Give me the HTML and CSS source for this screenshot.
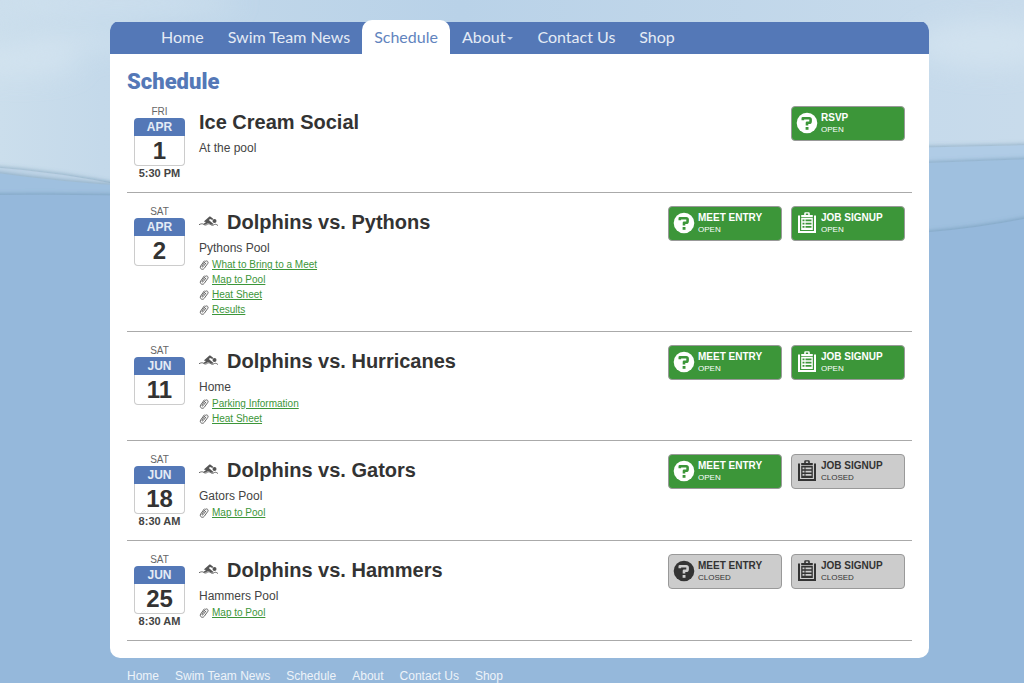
FILE: index.html
```html
<!DOCTYPE html>
<html lang="en">

<head>
  <meta charset="utf-8">
  <meta name="viewport" content="width=device-width, initial-scale=1">
  <title>Schedule</title>
  <link rel="stylesheet" href="styles.css">
</head>

<body>
  <!-- sky and waves -->
  <svg class="backdrop" viewBox="0 0 1024 260" preserveAspectRatio="none" aria-hidden="true">
    <defs>
      <linearGradient id="sky" x1="0" y1="0" x2="1" y2="0">
        <stop offset="0" stop-color="#cbdeec" />
        <stop offset=".1" stop-color="#c4d9ea" />
        <stop offset=".45" stop-color="#b9d2e8" />
        <stop offset=".9" stop-color="#c6daeb" />
        <stop offset="1" stop-color="#c8dbeb" />
      </linearGradient>
      <filter id="soft" x="-20%" y="-40%" width="140%" height="180%">
        <feGaussianBlur stdDeviation="12" />
      </filter>
      <filter id="shade" x="-5%" y="-10%" width="110%" height="120%">
        <feDropShadow dx="0" dy="-1" stdDeviation="2" flood-color="#56809f" flood-opacity=".5" />
      </filter>
    </defs>
    <path fill="url(#sky)" d="M0 0h1024v260H0z" />
    <g fill="#d8e7f2" filter="url(#soft)" opacity=".6">
      <ellipse cx="20" cy="62" rx="60" ry="14" />
      <ellipse cx="80" cy="42" rx="60" ry="8" />
      <ellipse cx="985" cy="45" rx="70" ry="24" />
      <ellipse cx="120" cy="3" rx="120" ry="9" />
    </g>
    <path fill="#bdd3e6" filter="url(#shade)" d="M-10 167Q60 172 130 187V260H-10z" />
    <path fill="#b0cce6" filter="url(#shade)" d="M900 148L1034 145V260H900z" />
    <path fill="#9fc0df" filter="url(#shade)" d="M-10 172Q60 182 130 186L900 164L1034 159V270H-10z" />
    <path fill="#95b8db" filter="url(#shade)" d="M-10 195Q300 191 500 232T930 232Q980 228 1034 217V270H-10z" />
    <path fill="#95b8db" d="M-10 236H1034V270H-10z" />
  </svg>

  <!-- shared icons -->
  <svg class="sprite" aria-hidden="true">
    <symbol id="clip" viewBox="0 0 10 12">
      <path fill="none" stroke="#555" stroke-width=".9" stroke-linecap="round"
        d="M6.8 4.2L4.2 7.6C3.5 8.5 2.5 7.7 3.1 6.9L6.2 2.6C7.4 1 9.9 2.5 8.8 4.4L5.2 9.4C3.6 11.5.2 9.6 1.6 7.1L5.2 2" />
    </symbol>
    <symbol id="swimmer" viewBox="0 0 20 12">
      <path fill="#555" d="M4.8 5.5L9.9.9c.5-.4 1.2-.4 1.7-.1l2.6 2-.8 1.2-2.3-1.1-1.3 1.2 5 4.1c-1.5.7-2.7.5-3.8-.3-1.3-1-2.4-.8-3.7.1-1 .7-2.1.9-3.3.3L7 6.1z" />
      <circle cx="15.5" cy="5" r="2" fill="#555" />
      <path fill="none" stroke="#666" stroke-width="1" d="M0 8.7c2-.9 3.1-1.4 4.7-.3 1.5 1 2.5.7 3.7-.2 1.3-.8 2.5-.2 3.5.6 1.4.8 2.5.5 3.6-.3 1.2-.6 2.3.1 3.5 1.1" />
    </symbol>
    <symbol id="question" viewBox="0 0 22 22">
      <circle cx="11" cy="11" r="10.3" fill="currentColor" />
      <path fill="none" stroke="var(--face)" stroke-width="2.6" stroke-linejoin="round" d="M6.8 8.2V6.3H13.2Q14.6 6.3 14.6 7.6V9.2Q14.6 10.8 13 10.8H11V13.6" />
      <path fill="var(--face)" d="M9.6 15h2.9v2.8H9.6z" />
    </symbol>
    <symbol id="clipboard" viewBox="0 0 20 22">
      <path fill="currentColor" d="M1 3.5h2v15.500h14V3.500h2V21H1z" />
      <path fill="currentColor" fill-rule="evenodd" d="M4.200 3h3V1.600Q7.200.3 8.400.3h3.200q1.200 0 1.200 1.300V3h3v2.300H4.200zM8.800 1.600V3h2.400V1.600z" />
      <path fill="currentColor" fill-rule="evenodd" d="M4.200 6h11.600v12H4.200zM5.500 7.500v1.700h2V7.500zm3 0v1.700h6V7.500zM5.500 10.700v1.700h2v-1.700zm3 0v1.700h6v-1.700zM5.500 14v1.700h2V14zm3 0v1.700h6V14z" />
    </symbol>
  </svg>

  <div class="page">
    <nav class="menu">
      <a href="#">Home</a>
      <a href="#">Swim Team News</a>
      <a href="#" class="active">Schedule</a>
      <a href="#" class="drop">About</a>
      <a href="#">Contact Us</a>
      <a href="#">Shop</a>
    </nav>

    <main class="content">
      <h1>Schedule</h1>

      <section class="event">
        <div class="date">
          <div class="weekday">FRI</div>
          <div class="calendar"><span class="month">APR</span><span class="day">1</span></div>
          <div class="time">5:30 PM</div>
        </div>
        <div class="details">
          <h2>Ice Cream Social</h2>
          <p>At the pool</p>
        </div>
        <div class="actions">
          <button class="open"><svg><use href="#question" /></svg><span><b>RSVP</b><small>OPEN</small></span></button>
        </div>
      </section>

      <section class="event">
        <div class="date">
          <div class="weekday">SAT</div>
          <div class="calendar"><span class="month">APR</span><span class="day">2</span></div>
        </div>
        <div class="details">
          <h2><svg><use href="#swimmer" /></svg>Dolphins vs. Pythons</h2>
          <p>Pythons Pool</p>
          <ul>
            <li><svg><use href="#clip" /></svg><a href="#">What to Bring to a Meet</a></li>
            <li><svg><use href="#clip" /></svg><a href="#">Map to Pool</a></li>
            <li><svg><use href="#clip" /></svg><a href="#">Heat Sheet</a></li>
            <li><svg><use href="#clip" /></svg><a href="#">Results</a></li>
          </ul>
        </div>
        <div class="actions">
          <button class="open"><svg><use href="#question" /></svg><span><b>MEET ENTRY</b><small>OPEN</small></span></button>
          <button class="open"><svg><use href="#clipboard" /></svg><span><b>JOB SIGNUP</b><small>OPEN</small></span></button>
        </div>
      </section>

      <section class="event">
        <div class="date">
          <div class="weekday">SAT</div>
          <div class="calendar"><span class="month">JUN</span><span class="day">11</span></div>
        </div>
        <div class="details">
          <h2><svg><use href="#swimmer" /></svg>Dolphins vs. Hurricanes</h2>
          <p>Home</p>
          <ul>
            <li><svg><use href="#clip" /></svg><a href="#">Parking Information</a></li>
            <li><svg><use href="#clip" /></svg><a href="#">Heat Sheet</a></li>
          </ul>
        </div>
        <div class="actions">
          <button class="open"><svg><use href="#question" /></svg><span><b>MEET ENTRY</b><small>OPEN</small></span></button>
          <button class="open"><svg><use href="#clipboard" /></svg><span><b>JOB SIGNUP</b><small>OPEN</small></span></button>
        </div>
      </section>

      <section class="event">
        <div class="date">
          <div class="weekday">SAT</div>
          <div class="calendar"><span class="month">JUN</span><span class="day">18</span></div>
          <div class="time">8:30 AM</div>
        </div>
        <div class="details">
          <h2><svg><use href="#swimmer" /></svg>Dolphins vs. Gators</h2>
          <p>Gators Pool</p>
          <ul>
            <li><svg><use href="#clip" /></svg><a href="#">Map to Pool</a></li>
          </ul>
        </div>
        <div class="actions">
          <button class="open"><svg><use href="#question" /></svg><span><b>MEET ENTRY</b><small>OPEN</small></span></button>
          <button class="closed"><svg><use href="#clipboard" /></svg><span><b>JOB SIGNUP</b><small>CLOSED</small></span></button>
        </div>
      </section>

      <section class="event">
        <div class="date">
          <div class="weekday">SAT</div>
          <div class="calendar"><span class="month">JUN</span><span class="day">25</span></div>
          <div class="time">8:30 AM</div>
        </div>
        <div class="details">
          <h2><svg><use href="#swimmer" /></svg>Dolphins vs. Hammers</h2>
          <p>Hammers Pool</p>
          <ul>
            <li><svg><use href="#clip" /></svg><a href="#">Map to Pool</a></li>
          </ul>
        </div>
        <div class="actions">
          <button class="closed"><svg><use href="#question" /></svg><span><b>MEET ENTRY</b><small>CLOSED</small></span></button>
          <button class="closed"><svg><use href="#clipboard" /></svg><span><b>JOB SIGNUP</b><small>CLOSED</small></span></button>
        </div>
      </section>
    </main>

    <footer class="footer">
      <a href="#">Home</a>
      <a href="#">Swim Team News</a>
      <a href="#">Schedule</a>
      <a href="#">About</a>
      <a href="#">Contact Us</a>
      <a href="#">Shop</a>
    </footer>
  </div>
</body>

</html>
```

FILE: styles.css
```css
* {
  box-sizing: border-box;
}

body {
  margin: 0;
  background: #95b8db;
  color: #444;
  font-family: "Liberation Sans", Arial, sans-serif;
  font-size: 12px;
}

.backdrop {
  position: absolute;
  top: 0;
  left: 0;
  width: 100%;
  height: 260px;
  z-index: -1;
}

.sprite {
  position: absolute;
  width: 0;
  height: 0;
}

.page {
  padding: 20px 95px 0 110px;
}

.menu {
  display: flex;
  height: 34px;
  padding-left: 39px;
  background: linear-gradient(#5478b7, #5478b7) 0 2px no-repeat;
  border-radius: 12px 12px 0 0;
}

.menu a {
  padding: 0 12px;
  border-radius: 10px 10px 0 0;
  color: #e4ebf5;
  font-family: Lato, sans-serif;
  font-size: 16px;
  line-height: 34px;
  text-decoration: none;
}

.menu .active {
  background: #fff;
  color: #6284be;
}

.menu .drop::after {
  content: "";
  display: inline-block;
  margin-left: 2px;
  border: 3px solid transparent;
  border-top-color: #c5d2e8;
  border-bottom: 0;
  vertical-align: 3px;
}

.content {
  padding: 16px 17px 17px;
  background: #fff;
  border-radius: 0 0 10px 10px;
}

h1 {
  margin: 0;
  color: #5478b7;
  font-family: Roboto, sans-serif;
  font-size: 22px;
  font-weight: 900;
  line-height: 24px;
}

.event {
  display: flex;
  padding: 12px 7px;
  border-bottom: 1px solid #aaa;
}

h1 + .event {
  margin-top: -1px;
}

.date {
  width: 51px;
  margin-right: 14px;
  text-align: center;
}

.weekday {
  color: #666;
  font-size: 10px;
  line-height: 13px;
}

.month,
.day {
  display: block;
  font-weight: bold;
}

.month {
  border-radius: 4px 4px 0 0;
  background: #5478b7;
  color: #e4ebf5;
  font-size: 12px;
  line-height: 18px;
}

.day {
  border: 1px solid #ccc;
  border-top: 0;
  border-radius: 0 0 4px 4px;
  color: #333;
  font-size: 24px;
  line-height: 29px;
}

.time {
  font-size: 11px;
  font-weight: bold;
  line-height: 14px;
}

.details {
  flex: 1;
}

h2 {
  display: flex;
  align-items: center;
  margin: 4px 0;
  color: #333;
  font-size: 20px;
  line-height: 26px;
}

h2 svg {
  width: 20px;
  height: 12px;
  margin-right: 8px;
}

p {
  margin: 0;
  font-size: 12px;
  line-height: 18px;
}

ul {
  margin: 0;
  padding: 0 0 2px;
  list-style: none;
}

li {
  display: flex;
  align-items: center;
  height: 15px;
}

li svg {
  width: 10px;
  height: 12px;
  margin-right: 3px;
}

li a {
  color: #3c9639;
  font-size: 10px;
}

.actions {
  display: flex;
  align-items: flex-start;
  gap: 9px;
  padding-top: 1px;
}

button {
  display: flex;
  align-items: flex-start;
  gap: 2px;
  width: 114px;
  height: 35px;
  padding: 5px 5px 0 4px;
  border: 1px solid #999;
  border-radius: 4px;
  font-family: inherit;
  text-align: left;
}

button svg {
  width: 22px;
  height: 22px;
  margin-right: 1px;
}

button b,
button small {
  display: block;
  line-height: 12px;
}

button b {
  font-size: 10px;
}

button small {
  font-size: 8px;
}

.open {
  --face: #3c9639;
  background: var(--face);
  color: #fff;
}

.closed {
  --face: #ccc;
  background: var(--face);
  color: #333;
}

.footer {
  display: flex;
  gap: 16px;
  padding: 10px 17px;
}

.footer a {
  color: #edf3f9;
  font-size: 12px;
  line-height: 16px;
  text-decoration: none;
}
```
